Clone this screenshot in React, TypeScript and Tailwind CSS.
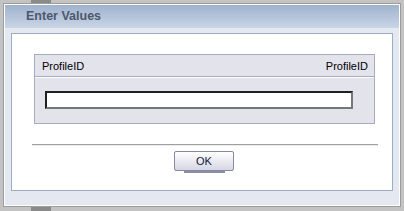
import React from 'react';

const font = { fontFamily: '"Liberation Sans", Arial, sans-serif' };

const App: React.FC = () => {
  return (
    <div className="relative w-[404px] h-[211px] bg-[#c3c3c3] overflow-hidden" style={font}>
      {/* bits of the page behind the dialog */}
      <div className="absolute left-[31px] top-0 w-[20px] h-[3px] bg-[#8a8a8a]" />
      <div className="absolute left-[31px] bottom-0 w-[20px] h-[4px] bg-[#8a8a8a]" />

      {/* Dialog */}
      <div className="absolute left-[3px] top-[3px] w-[398px] h-[204px] border border-[#9c9c9c] bg-white p-px flex flex-col">
        <div className="h-[23px] shrink-0 flex items-center pl-[21px] bg-gradient-to-b from-[#9fb2ce] to-[#cad5e5]">
          <span className="text-[12.5px] font-bold text-[#4d586c]">Enter Values</span>
        </div>

        <div className="flex-1 bg-[#e3e8f1] pt-[5px] pl-[6px] pr-[6px] pb-[14px] flex">
          <div className="flex-1 bg-white border border-[#9eabc5] flex flex-col">
            {/* group */}
            <div className="ml-[22px] mr-[17px] mt-[20px] border border-[#a9a9c3] bg-[#e3e3ec] flex flex-col">
              <div className="h-[22px] flex items-center justify-between pl-[7px] pr-[6px] pt-px border-b border-[#a9a9c3] text-[11px] text-black">
                <span>ProfileID</span>
                <span>ProfileID</span>
              </div>
              <div className="h-[46px] pt-[13px] pl-[10px] border-t border-white">
                <div className="w-[308px] h-[18px] bg-white border-2 border-t-[#202020] border-l-[#202020] border-r-[#767676] border-b-[#767676]" />
              </div>
            </div>

            {/* separator */}
            <div className="ml-[20px] w-[346px] mt-[20px] h-[2px] border-t border-[#a0a0a0] border-b border-b-[#ededed]" />

            {/* button */}
            <div className="flex justify-center mt-[5px] pl-[4px]">
              <div className="relative">
                <button className="w-[60px] h-[20px] rounded-[2px] border border-[#8787a6] bg-gradient-to-b from-white to-[#d6d6e4] text-[11px] text-[#10183a] flex items-center justify-center">
                  OK
                </button>
                <div className="absolute left-[10px] -bottom-[2px] w-[41px] h-[2px] bg-[#8d8da8]" />
              </div>
            </div>
          </div>
        </div>
      </div>
    </div>
  );
};

export default App;
